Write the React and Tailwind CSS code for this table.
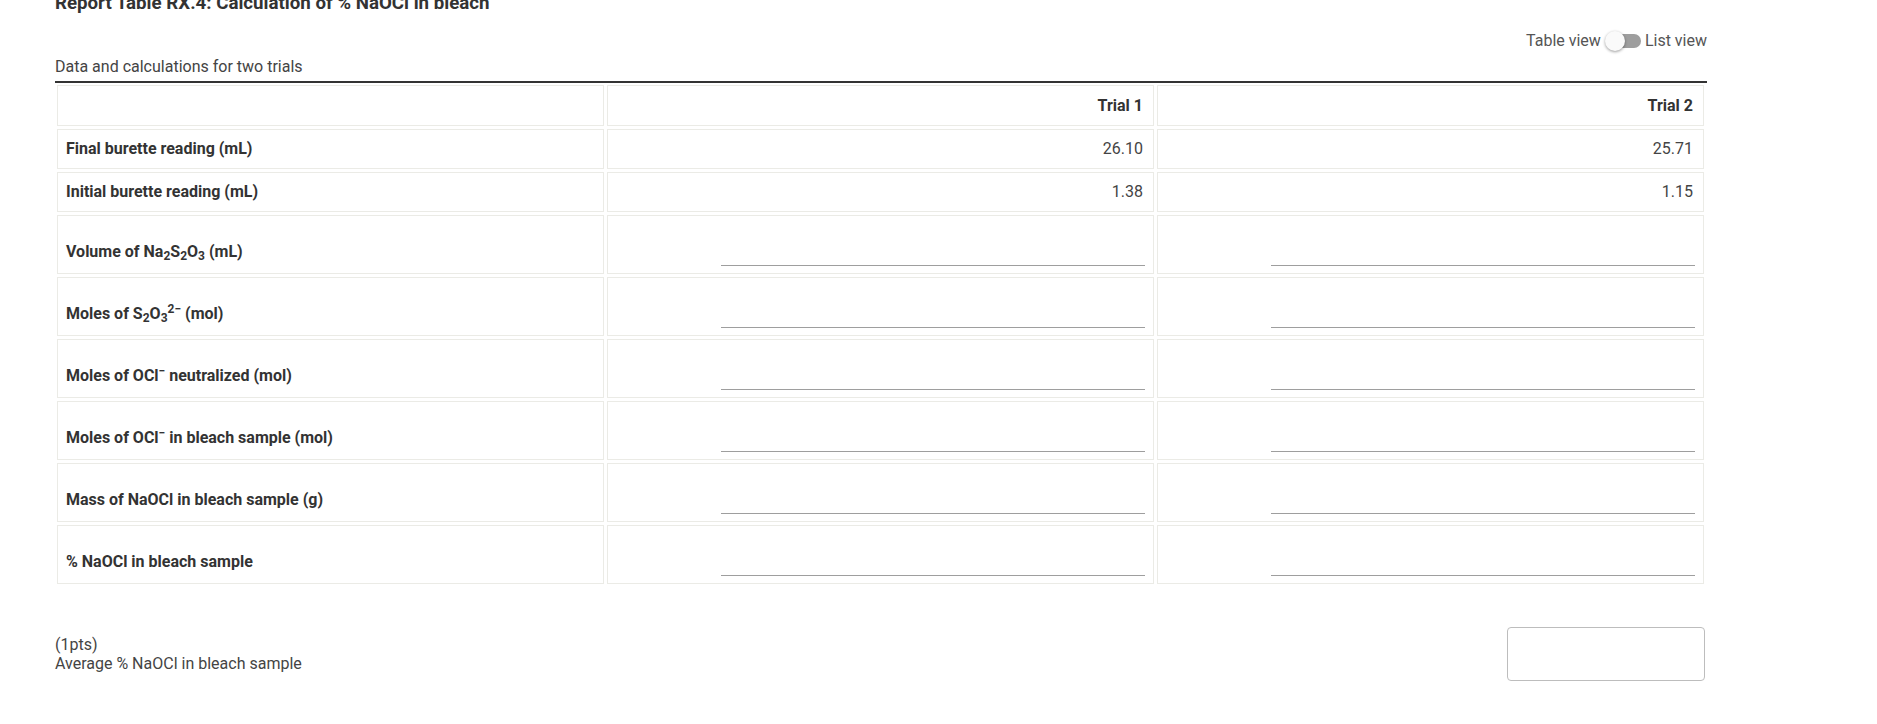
import React, { useState } from 'react';

const font = { fontFamily: 'Roboto, "Liberation Sans", sans-serif' };

function Toggle({ on, onChange }) {
  return (
    <button
      onClick={() => onChange(!on)}
      className="relative w-[36px] h-[20px] mx-[4px] flex items-center"
    >
      <span className="absolute left-[3px] right-0 h-[14px] rounded-full bg-[#9e9e9e]" />
      <span
        className={
          'absolute top-0 w-[20px] h-[20px] rounded-full bg-[#fafafa] shadow-[0_1px_3px_rgba(0,0,0,0.4)] ' +
          (on ? 'left-[16px]' : 'left-0')
        }
      />
    </button>
  );
}

const rows = [
  { label: 'Final burette reading (mL)', t1: '26.10', t2: '25.71' },
  { label: 'Initial burette reading (mL)', t1: '1.38', t2: '1.15' },
  {
    label: (
      <>
        Volume of Na<sub className="text-[12px]">2</sub>S<sub className="text-[12px]">2</sub>O
        <sub className="text-[12px]">3</sub> (mL)
      </>
    ),
    input: true,
  },
  {
    label: (
      <>
        Moles of S<sub className="text-[12px]">2</sub>O<sub className="text-[12px]">3</sub>
        <sup className="text-[12px]">2−</sup> (mol)
      </>
    ),
    input: true,
  },
  {
    label: (
      <>
        Moles of OCl<sup className="text-[12px]">−</sup> neutralized (mol)
      </>
    ),
    input: true,
  },
  {
    label: (
      <>
        Moles of OCl<sup className="text-[12px]">−</sup> in bleach sample (mol)
      </>
    ),
    input: true,
  },
  { label: 'Mass of NaOCl in bleach sample (g)', input: true },
  { label: '% NaOCl in bleach sample', input: true },
];

function InputCell() {
  return (
    <td className="border border-[#ebebe6] align-bottom pb-[7px] pr-[8px]">
      <input
        type="text"
        className="block ml-auto w-[424px] h-[28px] border-b border-[#9e9e9e] outline-none text-right text-[16px] text-[#444]"
      />
    </td>
  );
}

export default function App() {
  const [listView, setListView] = useState(false);

  return (
    <div className="w-full min-h-[724px] bg-white text-[#444]" style={font}>
      <div className="ml-[55px] w-[1652px]">
        <h1 className="-mt-[6px] text-[18.7px] leading-[18px] font-bold text-[#333]">
          Report Table RX.4: Calculation of % NaOCl in bleach
        </h1>

        <div className="mt-[19px] flex justify-end items-center text-[16px] leading-[20px] text-[#555]">
          <span>Table view</span>
          <Toggle on={listView} onChange={setListView} />
          <span>List view</span>
        </div>

        <p className="mt-[6px] text-[16px] leading-[20px] text-[#444]">Data and calculations for two trials</p>
        <div className="mt-[4px] h-[2px] bg-[#333]" />

        <table className="-ml-px w-[1653px] table-fixed border-separate border-spacing-[3px] -mt-[1px] text-[16px]">
          <thead>
            <tr>
              <th className="h-[41px] border border-[#ebebe6]" />
              <th className="h-[41px] border border-[#ebebe6] text-right pr-[10px] font-bold text-[#333]">Trial 1</th>
              <th className="h-[41px] border border-[#ebebe6] text-right pr-[10px] font-bold text-[#333]">Trial 2</th>
            </tr>
          </thead>
          <tbody>
            {rows.map((r, i) =>
              r.input ? (
                <tr key={i}>
                  <td className="h-[59px] border border-[#ebebe6] align-bottom pl-[8px] pb-[11px] leading-[20px] font-bold text-[#333]">
                    {r.label}
                  </td>
                  <InputCell />
                  <InputCell />
                </tr>
              ) : (
                <tr key={i}>
                  <td className="h-[40px] border border-[#ebebe6] pl-[8px] font-bold text-[#333]">{r.label}</td>
                  <td className="h-[40px] border border-[#ebebe6] text-right pr-[10px] text-[#444]">{r.t1}</td>
                  <td className="h-[40px] border border-[#ebebe6] text-right pr-[10px] text-[#444]">{r.t2}</td>
                </tr>
              )
            )}
          </tbody>
        </table>

        <div className="mt-[40px] flex justify-between items-center">
          <div className="text-[16px] leading-[19px] text-[#444]">
            <div>(1pts)</div>
            <div>Average % NaOCl in bleach sample</div>
          </div>
          <input
            type="text"
            className="mr-[2px] w-[198px] h-[54px] rounded-[4px] border border-[#bdbdbd] outline-none px-2 text-[16px]"
          />
        </div>
      </div>
    </div>
  );
}
